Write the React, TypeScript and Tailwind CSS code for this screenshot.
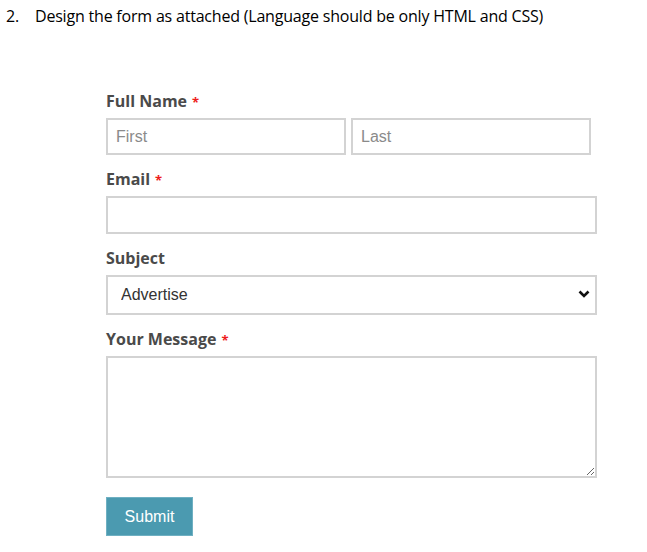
import { memo } from "react";

const Label = ({ text, required }: { text: string; required?: boolean }) => (
  <label className="mb-[7px] block h-[20px] font-['Open_Sans',sans-serif] text-[16px] leading-[20px] font-bold text-[#4a4a4a]">
    {text}
    {required && <span className="ml-[5px] text-[13px] text-[#ee1c1c]">*</span>}
  </label>
);

const inputClass =
  "block border-2 border-[#d3d3d3] bg-white pl-[8px] font-['Liberation_Sans',Arial,sans-serif] text-[16px] text-[#333] outline-none placeholder:text-[#8a8a8a]";

const App = () => {
  return (
    <div className="min-h-screen bg-white">
      <p className="pl-[6px] pt-[6px] font-['Open_Sans',sans-serif] text-[16px] leading-[20px] tracking-[-0.2px] text-black">
        <span className="inline-block w-[29px]">2.</span>
        Design the form as attached (Language should be only HTML and CSS)
      </p>

      <form className="ml-[106px] mt-[65px] w-[491px]" onSubmit={(e) => e.preventDefault()}>
        <div className="mb-[14px]">
          <Label text="Full Name" required />
          <div className="flex w-[485px] gap-[5px]">
            <input className={`${inputClass} h-[37px] w-[240px]`} placeholder="First" />
            <input className={`${inputClass} h-[37px] w-[240px]`} placeholder="Last" />
          </div>
        </div>

        <div className="mb-[14px]">
          <Label text="Email" required />
          <input type="email" className={`${inputClass} h-[38px] w-full`} />
        </div>

        <div className="mb-[14px]">
          <Label text="Subject" />
          <div className="relative">
            <select
              defaultValue="Advertise"
              className="block h-[40px] w-full appearance-none border-2 border-[#d3d3d3] bg-white pl-[13px] font-['Liberation_Sans',Arial,sans-serif] text-[16px] text-[#333] outline-none"
            >
              <option>Advertise</option>
              <option>Support</option>
              <option>Feedback</option>
            </select>
            <svg
              className="pointer-events-none absolute right-[7px] top-[15px]"
              width="12"
              height="8"
              viewBox="0 0 12 8"
              fill="none"
            >
              <path d="M1.5 1.5 L6 6 L10.5 1.5" stroke="#111" strokeWidth="2.6" />
            </svg>
          </div>
        </div>

        <div className="mb-[19px]">
          <Label text="Your Message" required />
          <textarea className={`${inputClass} h-[122px] w-full`} />
        </div>

        <button
          type="submit"
          className="block h-[39px] w-[87px] border border-[#6fb0c2] bg-[#4b9ab0] font-['Liberation_Sans',Arial,sans-serif] text-[16px] text-white"
        >
          Submit
        </button>
      </form>
    </div>
  );
};

export default memo(App);
